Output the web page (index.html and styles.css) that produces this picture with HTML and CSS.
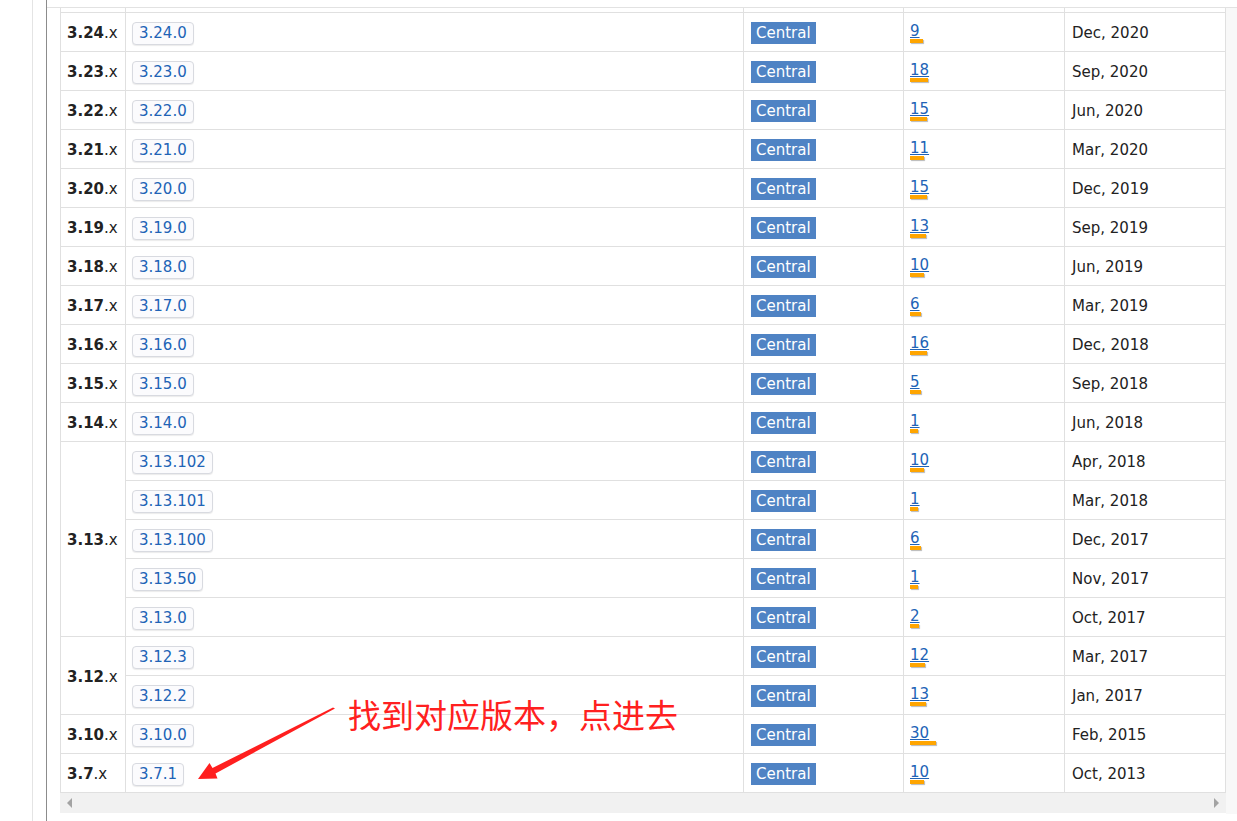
FILE: index.html
```html
<!DOCTYPE html>
<html>
<head>
    <meta charset="UTF-8">
    <title>Versions</title>
    <link rel="stylesheet" href="styles.css">
</head>
<body>
    <div class="page">
        <div class="gutter"></div>
        <div class="rail"></div>
        <div class="content">
            <div class="panel">
                <div class="listing">
                    <table class="grid">
                        <colgroup>
                            <col class="c-group">
                            <col class="c-version">
                            <col class="c-repo">
                            <col class="c-usage">
                            <col class="c-date">
                        </colgroup>
                        <tbody>
                            <tr class="sliver"><td></td><td></td><td></td><td></td><td></td></tr>
                            <tr>
                                <td class="group"><b>3.24</b>.x</td>
                                <td><a class="vbtn" href="#">3.24.0</a></td>
                                <td><span class="repo">Central</span></td>
                                <td><a class="count" href="#">9</a><div class="bar" style="width: 13px"></div></td>
                                <td class="date">Dec, 2020</td>
                            </tr>
                            <tr>
                                <td class="group"><b>3.23</b>.x</td>
                                <td><a class="vbtn" href="#">3.23.0</a></td>
                                <td><span class="repo">Central</span></td>
                                <td><a class="count" href="#">18</a><div class="bar" style="width: 18px"></div></td>
                                <td class="date">Sep, 2020</td>
                            </tr>
                            <tr>
                                <td class="group"><b>3.22</b>.x</td>
                                <td><a class="vbtn" href="#">3.22.0</a></td>
                                <td><span class="repo">Central</span></td>
                                <td><a class="count" href="#">15</a><div class="bar" style="width: 17px"></div></td>
                                <td class="date">Jun, 2020</td>
                            </tr>
                            <tr>
                                <td class="group"><b>3.21</b>.x</td>
                                <td><a class="vbtn" href="#">3.21.0</a></td>
                                <td><span class="repo">Central</span></td>
                                <td><a class="count" href="#">11</a><div class="bar" style="width: 14px"></div></td>
                                <td class="date">Mar, 2020</td>
                            </tr>
                            <tr>
                                <td class="group"><b>3.20</b>.x</td>
                                <td><a class="vbtn" href="#">3.20.0</a></td>
                                <td><span class="repo">Central</span></td>
                                <td><a class="count" href="#">15</a><div class="bar" style="width: 17px"></div></td>
                                <td class="date">Dec, 2019</td>
                            </tr>
                            <tr>
                                <td class="group"><b>3.19</b>.x</td>
                                <td><a class="vbtn" href="#">3.19.0</a></td>
                                <td><span class="repo">Central</span></td>
                                <td><a class="count" href="#">13</a><div class="bar" style="width: 16px"></div></td>
                                <td class="date">Sep, 2019</td>
                            </tr>
                            <tr>
                                <td class="group"><b>3.18</b>.x</td>
                                <td><a class="vbtn" href="#">3.18.0</a></td>
                                <td><span class="repo">Central</span></td>
                                <td><a class="count" href="#">10</a><div class="bar" style="width: 14px"></div></td>
                                <td class="date">Jun, 2019</td>
                            </tr>
                            <tr>
                                <td class="group"><b>3.17</b>.x</td>
                                <td><a class="vbtn" href="#">3.17.0</a></td>
                                <td><span class="repo">Central</span></td>
                                <td><a class="count" href="#">6</a><div class="bar" style="width: 11px"></div></td>
                                <td class="date">Mar, 2019</td>
                            </tr>
                            <tr>
                                <td class="group"><b>3.16</b>.x</td>
                                <td><a class="vbtn" href="#">3.16.0</a></td>
                                <td><span class="repo">Central</span></td>
                                <td><a class="count" href="#">16</a><div class="bar" style="width: 17px"></div></td>
                                <td class="date">Dec, 2018</td>
                            </tr>
                            <tr>
                                <td class="group"><b>3.15</b>.x</td>
                                <td><a class="vbtn" href="#">3.15.0</a></td>
                                <td><span class="repo">Central</span></td>
                                <td><a class="count" href="#">5</a><div class="bar" style="width: 11px"></div></td>
                                <td class="date">Sep, 2018</td>
                            </tr>
                            <tr>
                                <td class="group"><b>3.14</b>.x</td>
                                <td><a class="vbtn" href="#">3.14.0</a></td>
                                <td><span class="repo">Central</span></td>
                                <td><a class="count" href="#">1</a><div class="bar" style="width: 8px"></div></td>
                                <td class="date">Jun, 2018</td>
                            </tr>
                            <tr>
                                <td class="group" rowspan="5"><b>3.13</b>.x</td>
                                <td><a class="vbtn" href="#">3.13.102</a></td>
                                <td><span class="repo">Central</span></td>
                                <td><a class="count" href="#">10</a><div class="bar" style="width: 14px"></div></td>
                                <td class="date">Apr, 2018</td>
                            </tr>
                            <tr>
                                <td><a class="vbtn" href="#">3.13.101</a></td>
                                <td><span class="repo">Central</span></td>
                                <td><a class="count" href="#">1</a><div class="bar" style="width: 8px"></div></td>
                                <td class="date">Mar, 2018</td>
                            </tr>
                            <tr>
                                <td><a class="vbtn" href="#">3.13.100</a></td>
                                <td><span class="repo">Central</span></td>
                                <td><a class="count" href="#">6</a><div class="bar" style="width: 11px"></div></td>
                                <td class="date">Dec, 2017</td>
                            </tr>
                            <tr>
                                <td><a class="vbtn" href="#">3.13.50</a></td>
                                <td><span class="repo">Central</span></td>
                                <td><a class="count" href="#">1</a><div class="bar" style="width: 8px"></div></td>
                                <td class="date">Nov, 2017</td>
                            </tr>
                            <tr>
                                <td><a class="vbtn" href="#">3.13.0</a></td>
                                <td><span class="repo">Central</span></td>
                                <td><a class="count" href="#">2</a><div class="bar" style="width: 9px"></div></td>
                                <td class="date">Oct, 2017</td>
                            </tr>
                            <tr>
                                <td class="group" rowspan="2"><b>3.12</b>.x</td>
                                <td><a class="vbtn" href="#">3.12.3</a></td>
                                <td><span class="repo">Central</span></td>
                                <td><a class="count" href="#">12</a><div class="bar" style="width: 15px"></div></td>
                                <td class="date">Mar, 2017</td>
                            </tr>
                            <tr>
                                <td><a class="vbtn" href="#">3.12.2</a></td>
                                <td><span class="repo">Central</span></td>
                                <td><a class="count" href="#">13</a><div class="bar" style="width: 16px"></div></td>
                                <td class="date">Jan, 2017</td>
                            </tr>
                            <tr>
                                <td class="group"><b>3.10</b>.x</td>
                                <td><a class="vbtn" href="#">3.10.0</a></td>
                                <td><span class="repo">Central</span></td>
                                <td><a class="count" href="#">30</a><div class="bar" style="width: 26px"></div></td>
                                <td class="date">Feb, 2015</td>
                            </tr>
                            <tr>
                                <td class="group"><b>3.7</b>.x</td>
                                <td><a class="vbtn" href="#">3.7.1</a></td>
                                <td><span class="repo">Central</span></td>
                                <td><a class="count" href="#">10</a><div class="bar" style="width: 14px"></div></td>
                                <td class="date">Oct, 2013</td>
                            </tr>
                        </tbody>
                    </table>
                    <!-- horizontal scrollbar under the table -->
                    <div class="hscroll">
                        <span class="arrow-left"></span>
                        <span class="arrow-right"></span>
                    </div>
                </div>
                <div class="edge"></div>
            </div>
        </div>
    </div>

    <!-- annotation drawn over the screenshot -->
    <svg class="pointer" width="1237" height="821" viewBox="0 0 1237 821">
        <polygon points="335,708.5 215.5,773.5 217.5,778.5 198,779 209.5,763 212.5,768 333,707.5" fill="#ff1f1f"/>
    </svg>
    <div class="note">找到对应版本，点进去</div>
</body>
</html>
```

FILE: styles.css
```css
* {
    box-sizing: border-box;
    margin: 0;
    padding: 0;
}
body {
    font-family: "DejaVu Sans", Verdana, sans-serif;
    font-size: 15px;
    color: #222;
    background-color: #fff;
    width: 1237px;
    height: 821px;
    overflow: hidden;
}
.page {
    display: flex;
    height: 821px;
}
.gutter {
    width: 33px;
    border-right: 1px solid #e4e4e4;
}
.rail {
    width: 14px;
    border-right: 1px solid #8c8c8c;
}
.content {
    flex: 1;
    padding-top: 7px;
}
.panel {
    display: flex;
    border-top: 1px solid #e2e2e2;
    padding-left: 13px;
}
.listing {
    width: 1166px;
}
.edge {
    flex: 1;
    height: 806px;
    background-color: #f8f8f8;
}
.grid {
    width: 1166px;
    table-layout: fixed;
    border-collapse: separate;
    border-spacing: 0;
    border-left: 1px solid #e0e0e0;
}
.c-group { width: 65px; }
.c-version { width: 618px; }
.c-repo { width: 160px; }
.c-usage { width: 161px; }
.c-date { width: 161px; }
.grid tr {
    height: 39px;
}
.grid tr.sliver {
    height: 5px;
}
.grid td {
    border-right: 1px solid #e0e0e0;
    border-bottom: 1px solid #e0e0e0;
    padding: 2px 6px 0;
    vertical-align: middle;
    white-space: nowrap;
}
.grid tr.sliver td {
    padding: 0;
    height: 5px;
}
.grid td.group {
    padding-left: 6px;
    color: #222;
}
.grid td.group b {
    font-weight: bold;
}
.vbtn {
    display: inline-block;
    padding: 1px 6px;
    line-height: 19px;
    color: #2163b6;
    text-decoration: none;
    background-color: #fbfbfd;
    border: 1px solid #d8dae0;
    border-radius: 4px;
    box-shadow: 0 1px 1px rgba(0, 0, 0, 0.08);
}
.repo {
    display: inline-block;
    margin-left: 1px;
    padding: 2px 5px;
    line-height: 18px;
    color: #fff;
    background-color: #4f83c4;
}
.count {
    display: block;
    line-height: 16px;
    color: #2163b6;
    text-decoration: underline;
    text-decoration-thickness: 1px;
    text-underline-offset: 1px;
}
.bar {
    height: 4px;
    background-color: #ffa500;
    box-shadow: 1px 1px 1px #b8b8b8;
}
.grid td.date {
    padding-left: 7px;
    color: #222;
}
.hscroll {
    position: relative;
    height: 20px;
    background-color: #f1f1f1;
}
.arrow-left,
.arrow-right {
    position: absolute;
    top: 5px;
    width: 0;
    height: 0;
    border-top: 5px solid transparent;
    border-bottom: 5px solid transparent;
}
.arrow-left {
    left: 7px;
    border-right: 5px solid #a3a3a3;
}
.arrow-right {
    right: 7px;
    border-left: 5px solid #a3a3a3;
}
.pointer {
    position: absolute;
    left: 0;
    top: 0;
}
.note {
    position: absolute;
    left: 348px;
    top: 698px;
    font-family: "Noto Sans CJK SC", sans-serif;
    font-size: 33px;
    line-height: 33px;
    color: #ff2020;
    white-space: nowrap;
}
```
